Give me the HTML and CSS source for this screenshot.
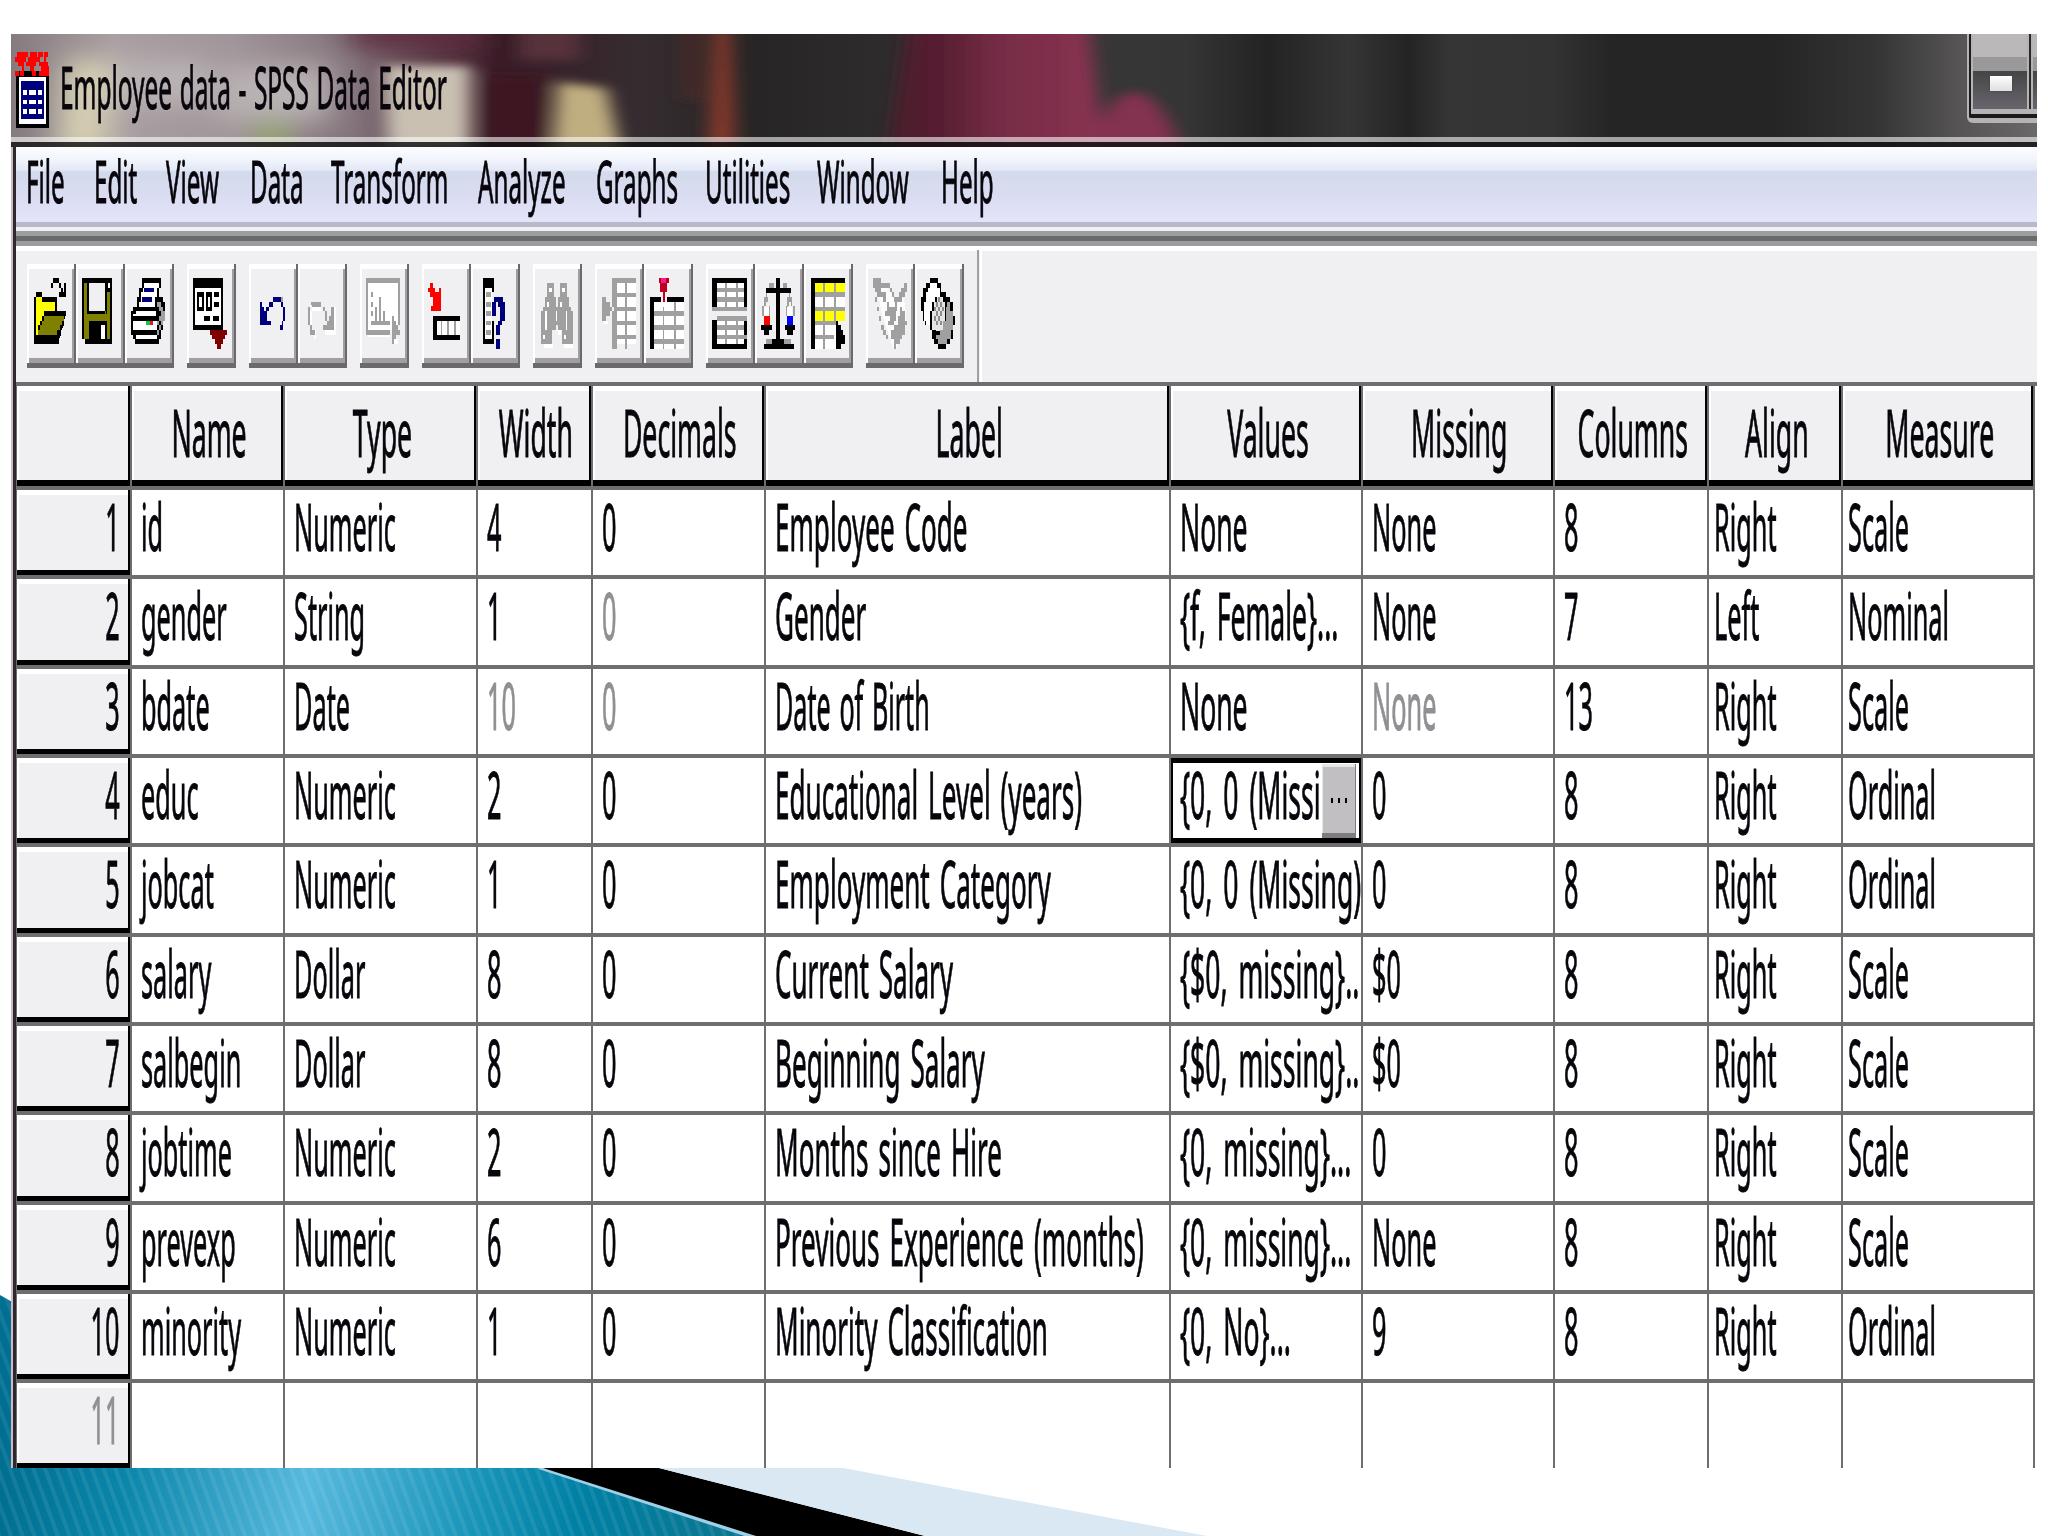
FILE: index.html
```html
<!DOCTYPE html>
<html lang="en">
<head>
    <meta charset="UTF-8">
    <meta name="viewport" content="width=device-width, initial-scale=1.0">
    <title>Employee data - SPSS Data Editor</title>
    <link rel="stylesheet" href="styles.css">
</head>
<body>
    <!-- Slide background -->
    <svg class="slide-bg" viewBox="0 0 2048 1536">
        <defs>
            <linearGradient id="teal" gradientUnits="userSpaceOnUse" x1="0" y1="1500" x2="720" y2="1560">
                <stop offset="0" stop-color="#006f91"/>
                <stop offset=".17" stop-color="#0a86aa"/>
                <stop offset=".42" stop-color="#58b9dd"/>
                <stop offset=".66" stop-color="#1894b8"/>
                <stop offset=".8" stop-color="#0080a5"/>
                <stop offset="1" stop-color="#0a7790"/>
            </linearGradient>
            <pattern id="stripes" width="11" height="11" patternUnits="userSpaceOnUse" patternTransform="rotate(-20)">
                <rect width="4" height="11" fill="#fff" opacity=".08"/>
            </pattern>
        </defs>
        <path d="M0 1295L14 1303V1468H543L754 1536H0z" fill="url(#teal)"/>
        <path d="M0 1295L14 1303V1468H543L754 1536H0z" fill="url(#stripes)"/>
        <path d="M539 1467L754 1537" stroke="#9fd0e6" stroke-width="4"/>
        <path d="M543 1468H659L925 1536H756z"/>
        <path d="M659 1468H843L1207 1536H925z" fill="#d9e8f2"/>
    </svg>

    <div class="window">
        <div class="titlebar">
            <svg class="glass" viewBox="11 34 2026 113" preserveAspectRatio="none">
                <defs>
                    <filter id="soft" x="-20%" y="-20%" width="140%" height="140%"><feGaussianBlur stdDeviation="9 5"/></filter>
                    <filter id="softer" x="-20%" y="-30%" width="140%" height="160%"><feGaussianBlur stdDeviation="16 12"/></filter>
                    <linearGradient id="base" gradientUnits="userSpaceOnUse" x1="11" y1="0" x2="2037" y2="0">
                        <stop offset="0" stop-color="#857b7f"/>
                        <stop offset=".05" stop-color="#a99fa2"/>
                        <stop offset=".11" stop-color="#a0959a"/>
                        <stop offset=".17" stop-color="#82727a"/>
                        <stop offset=".22" stop-color="#50303c"/>
                        <stop offset=".24" stop-color="#3a1c27"/>
                        <stop offset=".31" stop-color="#352c30"/>
                        <stop offset=".37" stop-color="#272525"/>
                        <stop offset=".53" stop-color="#383737"/>
                        <stop offset=".58" stop-color="#363535"/>
                        <stop offset=".62" stop-color="#242323"/>
                        <stop offset=".66" stop-color="#363535"/>
                        <stop offset=".69" stop-color="#252424"/>
                        <stop offset=".71" stop-color="#363535"/>
                        <stop offset=".76" stop-color="#343333"/>
                        <stop offset=".79" stop-color="#262525"/>
                        <stop offset=".87" stop-color="#262525"/>
                        <stop offset=".92" stop-color="#343434"/>
                        <stop offset=".96" stop-color="#555354"/>
                        <stop offset="1" stop-color="#6a6869"/>
                    </linearGradient>
                    <linearGradient id="pink" x1="0" x2="1" y1="0" y2="0">
                        <stop offset="0" stop-color="#4a1b2a"/>
                        <stop offset=".25" stop-color="#571f31"/>
                        <stop offset=".5" stop-color="#752c45"/>
                        <stop offset="1" stop-color="#8b3253"/>
                    </linearGradient>
                </defs>
                <rect x="11" y="34" width="2026" height="113" fill="url(#base)"/>
                <g filter="url(#softer)">
                    <path d="M350 20H480V48H350z" fill="#5d2c3c"/>
                    <path d="M65 60H110L108 155H58z" fill="#d8d1b4"/>
                    <path d="M110 60H210V105H110z" fill="#bab2b4"/>
                    <path d="M225 65H330V120H215z" fill="#b9b2b2"/>
                    <path d="M262 122H285V150H258z" fill="#8fb04c"/>
                </g>
                <g filter="url(#soft)">
                    <path d="M384 66H470V150H388z" fill="#c9c0b2"/>
                    <path d="M484 75H545V160H484z" fill="#3d1422"/>
                    <path d="M520 25H580V60H520z" fill="#56303a"/>
                    <path d="M558 82L606 88L622 155H552z" fill="#bfae80"/>
                    <path d="M684 25H698V100H684z" fill="#4c2a28"/>
                    <path d="M714 25H730L736 155H708z" fill="#84392a"/>
                </g>
                <g filter="url(#soft)">
                    <path d="M908 20H1088L1106 160H888z" fill="url(#pink)"/>
                    <path d="M1095 150Q1105 90 1140 92Q1168 105 1185 160H1090z" fill="#83304f"/>
                </g>
                <rect x="11" y="137" width="2026" height="5" fill="#fff" opacity=".58"/>
                <rect x="11" y="142" width="2026" height="5" fill="#111" opacity=".8"/>
            </svg>
            <svg class="app-icon" viewBox="22 25 102 226" preserveAspectRatio="none">
                <path d="M26 96h97v155H26zM34 82h80v14H34z"/>
                <path d="M33 98h83v141H33z" fill="#fff"/>
                <path d="M39 110h71v113H39z" fill="#00007c"/>
                <path d="M47 138h12v14H47zM65 138h20v14H65zM91 138h13v14H91zM47 167h12v14H47zM65 167h20v14H65zM91 167h13v14H91zM47 195h12v14H47zM65 195h20v14H65zM91 195h13v14H91z" fill="#fff"/>
                <path d="M28 26h34v14h-8v14h8v-14h6v-14h20v14h4v-14h14v14h-8v14h10v-28h14v14h-6v14h6v14h4v28H94v-14h6V68h-6V54H84v14h-4v14h6v14H72V82h-6V68H54V54h-4v28h-2v14H38V82h4V68H30V54h-8V40h6zM22 82h12v14H22z" fill="red"/>
            </svg>
            <span class="title">Employee data - SPSS Data Editor</span>
            <div class="minimize"><i></i></div>
        </div>

        <div class="client">
            <div class="menubar">
                <span>File</span>
                <span>Edit</span>
                <span>View</span>
                <span>Data</span>
                <span>Transform</span>
                <span>Analyze</span>
                <span>Graphs</span>
                <span>Utilities</span>
                <span>Window</span>
                <span>Help</span>
            </div>

            <div class="toolbar">
                <div class="group">
                    <!-- open -->
                    <svg class="btn" viewBox="52 72 147 312" preserveAspectRatio="none">
                        <path d="M129 115h19v14h-19zM123 129h6v14h-6zM148 129h6v14h6v14h2v-28h6v42h-20v-14h6v-14h-6z"/>
                        <path d="M78 157h19v14h45v43h26v14l-6 14v14l-7 14v14l-8 14v14H72V171h6z"/>
                        <path d="M78 171h19v15h39v28h-32v14h-7v14h-6v14h-6v28h-7z" fill="#ff0"/>
                        <path d="M104 228h58v14h-6v14h-6v14h-7v14H85v-14h6v-14h6v-14h7z" fill="#808000"/>
                    </svg>
                    <!-- save -->
                    <svg class="btn" viewBox="200 72 147 312" preserveAspectRatio="none">
                        <path d="M219 115h90v197h-83v-14h-7z"/>
                        <path d="M225 129h9v92h54v-64h15v141h-10v-56h-55v56h-13z" fill="#808000"/>
                        <path d="M234 129v84h57v-84h-3v84h-50v-84z"/>
                        <path d="M238 129h50v84h-50z" fill="#f0eff2"/>
                        <path d="M295 129h8v14h-8zM276 256h12v42h-12z" fill="#fff"/>
                        <path d="M291 129h3v92h-3z"/>
                    </svg>
                    <!-- print -->
                    <svg class="btn" viewBox="348 72 147 312" preserveAspectRatio="none">
                        <path d="M398 115h58v28h-6v28h12v14h5v57h-5v28h-6v28h-6v14h-71v-14h-6v-14h-7v-70h6v-14h13v-29h6v-28h7z"/>
                        <path d="M405 129h44v14h-6v28h-6v29h-46v-14h6v-29h6v-14h2z" fill="#fff"/>
                        <path d="M380 214h62v14h-70v-7h8zM372 242h71v28h-71zM380 284h63v14h-63z" fill="#fff"/>
                        <path d="M404 143h32v14h-32zM398 171h32v14h-32z" fill="#00007c"/>
                        <path d="M410 242h12v14h-12z" fill="#1c3"/><path d="M423 242h8v14h-8z" fill="#e13"/>
                        <path d="M449 185h6v15h6v14h6v28h-6v14h-6v-14h-6v-14h6v-14h-6v-14h-6v-14h6zM443 242h6v14h-6zM449 256h6v14h-6zM443 270h6v14h-6z" fill="#a0a0a0"/>
                    </svg>
                </div>
                <div class="group">
                    <!-- dialog recall -->
                    <svg class="btn" viewBox="534 72 147 312" preserveAspectRatio="none">
                        <path d="M552 115h90v155h-90z"/>
                        <path d="M558 143h78v113h-78z" fill="#fff"/>
                        <path d="M565 157h19v57h-19zM590 157h19v57h-19zM615 157h15v14h-15zM615 186h15v14h-15zM585 228h18v14h-18zM611 228h19v14h-19z"/>
                        <path d="M571 171h7v29h-7zM596 171h7v29h-7z" fill="#fff"/>
                        <path d="M603 270h51v14h-6v14h-6v14h-7v14h-12v-14h-6v-14h-7v-14h-7z" fill="#800000"/>
                    </svg>
                </div>
                <div class="group">
                    <!-- undo -->
                    <svg class="btn" viewBox="718 72 147 312" preserveAspectRatio="none">
                        <path d="M750 186h7v14h6v14h7v-14h7v-14h12v-15h25v15h-25v14h-12v14h-6v28h12v14h-33zM814 186h7v14h6v42h-6v28h-11v-14h6v-14h5v-42h-7z" fill="#00007c"/>
                        <path d="M814 171h7v15h-7z" fill="#a0a0a0"/>
                    </svg>
                    <!-- redo -->
                    <svg class="btn" viewBox="867 72 147 312" preserveAspectRatio="none">
                        <path d="M910 200h26v14h-26zM904 214h6v56h-6zM910 270h12v14h-12zM916 284h6v14h-6zM949 270h31v14h-31zM974 200h6v70h-6z" fill="#fff"/>
                        <path d="M904 186h32v14h12v14h7v28h6v-14h6v-28h7v70h-31v-14h12v-14h-6v-28h-7v-14h-32zM897 200h7v14h-7zM897 214h6v42h-6zM903 256h7v14h7v14h-13v-14h-1z" fill="#a0a0a0"/>
                    </svg>
                </div>
                <div class="group">
                    <!-- goto chart -->
                    <svg class="btn" viewBox="32 72 147 312" preserveAspectRatio="none">
                        <path d="M57 129h90v141H57zM57 284h64v6H57zM135 298h10v14h-10z" fill="#fff"/>
                        <path d="M51 115h102v141h-6V129H57v141h64v14H51zM64 157h6v14h-6zM64 186h6v14h-6zM64 214h6v14h-6zM64 242h12v-42h6v42h7v-70h6v70h7v-28h6v28h13v14H64zM127 228h7v14h6v14h6v14h7v14h-13v14h-6v14h-7z" fill="#a0a0a0"/>
                    </svg>
                </div>
                <div class="group">
                    <!-- goto case -->
                    <svg class="btn" viewBox="217 72 147 312" preserveAspectRatio="none">
                        <path d="M242 129h7v14h6v14h14v-14h6v70h-32v-14h6v-28h-7v-14h-7v-14h7z" fill="red"/>
                        <path d="M249 228h83v71h-83z"/>
                        <path d="M261 242h71v42h-71z" fill="#fff"/>
                        <path d="M274 242h4v42h-4zM293 242h4v42h-4zM312 242h6v42h-6z" fill="#a0a0a0"/>
                    </svg>
                    <!-- variables -->
                    <svg class="btn" viewBox="366 72 147 312" preserveAspectRatio="none">
                        <path d="M402 115h33v197h-33z"/>
                        <path d="M409 143h19v155h-19z" fill="#fff"/>
                        <path d="M411 157h16v14h-16zM411 186h16v14h-16zM411 214h16v14h-16zM411 242h16v14h-16zM411 270h16v14h-16z" fill="#a0a0a0"/>
                        <path d="M428 157h8v85h-8z" fill="#f0eff2"/>
                        <path d="M434 171h27v15h6v56h-7v14h-6v28h-13v-28h6v-14h7v-42h-6v-14h-6v42h-14v-42h6zM441 298h12v28h-12z" fill="#00007c"/>
                    </svg>
                </div>
                <div class="group">
                    <!-- find -->
                    <svg class="btn" viewBox="551 72 147 312" preserveAspectRatio="none">
                        <path d="M584 312h26v12h-26zM645 312h26v12h-26zM610 284h10v-14h14v14h-8v-12h-6v14h-10z" fill="#fff"/>
                        <path d="M594 129h19v42h7v29h6v-29h7v-42h19v42h6v29h7v14h6v98h-32v-42h-12v-14h-7v14h-12v42h-32v-98h6v-14h6v-29h6z" fill="#a0a0a0"/>
                        <path d="M600 143h7v14h-7zM639 143h7v14h-7zM594 186h6v14h-6zM633 186h6v14h-6zM588 214h6v56h-6zM650 214h4v56h-4zM582 284h6v14h-6zM645 284h6v14h-6zM620 214h4v28h-4z" fill="#fff"/>
                    </svg>
                </div>
                <div class="group">
                    <!-- insert case -->
                    <svg class="btn" viewBox="735 72 147 312" preserveAspectRatio="none">
                        <path d="M797 129h62v183h-62zM762 242h12v10h-12z" fill="#fff"/>
                        <path d="M787 115h71v14h-58v29h24v-29h6v29h28v13h-28v29h28v14h-28v28h28v14h-28v28h28v14h-28v28h-6v-28h-24v28h-13zM800 171v29h24v-29zM800 214v28h24v-28zM800 256v28h24v-28zM755 171h12v15h13v14h13v14h-13v14h-12v14h-13z" fill="#a0a0a0" fill-rule="evenodd"/>
                    </svg>
                    <!-- insert variable -->
                    <svg class="btn" viewBox="884 72 147 312" preserveAspectRatio="none">
                        <path d="M914 186h91v140h-91z" fill="#fff"/>
                        <path d="M901 171h33v15h-19v141h-14zM953 171h52v15h-52z"/>
                        <path d="M915 214h90v14h-90zM915 256h90v14h-90zM915 298h90v14h-90zM941 200h4v127h-4zM973 186h6v141h-6z" fill="#a0a0a0"/>
                        <path d="M928 115h32v14h-6v28h-8v28h-6v-28h-7v-28h-5z" fill="#c00020"/>
                        <path d="M936 115h14v14h-14z" fill="#f0208a"/>
                    </svg>
                </div>
                <div class="group">
                    <!-- split file -->
                    <svg class="btn" viewBox="48 72 147 312" preserveAspectRatio="none">
                        <path d="M66 115h105v86H66zM66 240h105v87H66z"/>
                        <path d="M80 129h82v71H80zM80 242h82v70H80z" fill="#fff"/>
                        <path d="M80 143h82v14H80zM80 171h82v15H80zM66 200h105v14H66zM80 228h91v14H80zM80 256h82v14H80zM80 284h91v14H80zM106 129h4v71h-4zM138 129h6v71h-6zM106 242h4v70h-4zM138 242h6v70h-6z" fill="#a0a0a0"/>
                    </svg>
                    <!-- weight cases -->
                    <svg class="btn" viewBox="196 72 147 312" preserveAspectRatio="none">
                        <path d="M239 129h13v14h-13zM279 129h12v14h-12zM228 298h76v14h-76zM228 157h4v14h4v28h6v29h-5v-29h-3v-14h-5v14h-6v29h-6v-29h5v-28h6zM298 157h4v14h6v28h8v29h-5v-29h-6v-14h-6v14h-5v29h-6v-29h5v-28h5z" fill="#a0a0a0"/>
                        <path d="M222 200h15v28h-15zM293 200h15v28h-15z" fill="#fff"/>
                        <path d="M258 115h14v28h32v15h-32v140h12v14h28v15h-90v-15h26v-14h10v-140h-30v-15h30zM215 256h31v14h-7v14h-17v-14h-7zM285 256h32v14h-7v14h-17v-14h-8z"/>
                        <path d="M222 228h18v28h-18z" fill="red"/><path d="M291 228h20v28h-20z" fill="#00f"/>
                    </svg>
                    <!-- select cases -->
                    <svg class="btn" viewBox="343 72 147 312" preserveAspectRatio="none">
                        <path d="M375 129h90v113h-26v85h-64z" fill="#fff"/>
                        <path d="M375 129h90v28h-90zM375 214h90v28h-90z" fill="#ff0"/>
                        <path d="M375 157h90v14h-90zM375 200h90v14h-90zM375 242h63v14h-63zM375 284h57v14h-57zM401 129h5v198h-5zM434 129h4v113h-4z" fill="#a0a0a0"/>
                        <path d="M363 115h102v14h-90v198h-12zM439 242h7v14h7v14h6v14h6v28h-12v15h-14z"/>
                    </svg>
                </div>
                <div class="group">
                    <!-- value labels -->
                    <svg class="btn" viewBox="528 72 147 312" preserveAspectRatio="none">
                        <path d="M562 143h30l20 30h30l6 50v30l-30 74h-8l-36-110z" fill="#fff" opacity=".8"/>
                        <path d="M554 115h20v14h25v14h-25v14h13v28h-7v-14h-19v-14h-7v-14h-6v-28h6zM642 129h8v28h-6v15h-7v14h-24v-14h-7v-15h-7v-14h8v14h6v14h13v-14h7v-14h9zM555 171h6v29h7v28h6v28h7v14h7v14h6v14h-7v-14h-7v-14h-6v-28h-7v-28h-6v-28h-6zM590 186h6v14h20v-14h6v28h-32zM585 214h32v28h-6v14h-18v-14h8v-14h-16zM630 200h7v14h7v28h6v14h-6v28h-7v14h-8v14h-12v15h-6v-29h-7v-28h7v-14h13v-28h6z" fill="#a0a0a0"/>
                    </svg>
                    <!-- use sets -->
                    <svg class="btn" viewBox="676 72 147 312" preserveAspectRatio="none">
                        <path d="M720 115h26v14h8v28h14v14h14v15h8v42h6v28h-6v42h-8v14h-12v15h-24v-15h-12v-14h-8v-28h-6v-14h-14v-14h-6v-28h-6v-42h6v-28h8v-15h12z"/>
                        <path d="M720 129h22v14h8v28h-14v15h-8v28h-6v42h-12v-14h-8v-56h6v-29h6v-14h6z" fill="#fff"/>
                        <path d="M772 186h10v28h8v56h-6v28h-12v14h-26v-14h-8v-14h14v-14h8v-28h8v-42h4z" fill="#a0a0a0"/>
                        <path d="M742 171h18v15h6v56h-6v28h-8v4h-14v-4h-10v-56h6v-28h8z" fill="#e4e4e4"/>
                        <path d="M744 171h6v15h-6zM752 186h6v14h-6zM738 186h6v14h-6zM745 200h6v14h-6zM758 200h5v14h-5zM732 200h6v14h-6zM738 214h6v14h-6zM752 214h6v14h-6zM745 228h6v14h-6zM732 228h6v14h-6zM738 242h6v14h-6zM752 242h6v14h-6z" fill="#8c8c8c"/>
                    </svg>
                </div>
                <div class="dock-end"></div>
            </div>

            <!-- Variable view -->
            <div class="sheet">
                <div class="row head">
                    <div></div><div><span>Name</span></div><div><span>Type</span></div><div><span>Width</span></div><div><span>Decimals</span></div><div><span>Label</span></div><div><span>Values</span></div><div><span>Missing</span></div><div><span>Columns</span></div><div><span>Align</span></div><div><span>Measure</span></div>
                </div>
                <div class="row">
                    <div class="num"><span>1</span></div><div><span>id</span></div><div><span>Numeric</span></div><div><span>4</span></div><div><span>0</span></div><div><span>Employee Code</span></div><div><span>None</span></div><div><span>None</span></div><div><span>8</span></div><div><span>Right</span></div><div><span>Scale</span></div>
                </div>
                <div class="row">
                    <div class="num"><span>2</span></div><div><span>gender</span></div><div><span>String</span></div><div><span>1</span></div><div class="off"><span>0</span></div><div><span>Gender</span></div><div><span>{f, Female}...</span></div><div><span>None</span></div><div><span>7</span></div><div><span>Left</span></div><div><span>Nominal</span></div>
                </div>
                <div class="row">
                    <div class="num"><span>3</span></div><div><span>bdate</span></div><div><span>Date</span></div><div class="off"><span>10</span></div><div class="off"><span>0</span></div><div class="tight"><span>Date of Birth</span></div><div><span>None</span></div><div class="off"><span>None</span></div><div><span>13</span></div><div><span>Right</span></div><div><span>Scale</span></div>
                </div>
                <div class="row">
                    <div class="num"><span>4</span></div><div><span>educ</span></div><div><span>Numeric</span></div><div><span>2</span></div><div><span>0</span></div><div><span>Educational Level (years)</span></div><div class="active"><span>{0, 0 (Missi</span><button class="more"><i></i><i></i><i></i></button></div><div><span>0</span></div><div><span>8</span></div><div><span>Right</span></div><div><span>Ordinal</span></div>
                </div>
                <div class="row">
                    <div class="num"><span>5</span></div><div><span>jobcat</span></div><div><span>Numeric</span></div><div><span>1</span></div><div><span>0</span></div><div><span>Employment Category</span></div><div><span>{0, 0 (Missing)</span></div><div><span>0</span></div><div><span>8</span></div><div><span>Right</span></div><div><span>Ordinal</span></div>
                </div>
                <div class="row">
                    <div class="num"><span>6</span></div><div><span>salary</span></div><div><span>Dollar</span></div><div><span>8</span></div><div><span>0</span></div><div><span>Current Salary</span></div><div><span>{$0, missing}..</span></div><div><span>$0</span></div><div><span>8</span></div><div><span>Right</span></div><div><span>Scale</span></div>
                </div>
                <div class="row">
                    <div class="num"><span>7</span></div><div><span>salbegin</span></div><div><span>Dollar</span></div><div><span>8</span></div><div><span>0</span></div><div><span>Beginning Salary</span></div><div><span>{$0, missing}..</span></div><div><span>$0</span></div><div><span>8</span></div><div><span>Right</span></div><div><span>Scale</span></div>
                </div>
                <div class="row">
                    <div class="num"><span>8</span></div><div><span>jobtime</span></div><div><span>Numeric</span></div><div><span>2</span></div><div><span>0</span></div><div><span>Months since Hire</span></div><div><span>{0, missing}...</span></div><div><span>0</span></div><div><span>8</span></div><div><span>Right</span></div><div><span>Scale</span></div>
                </div>
                <div class="row">
                    <div class="num"><span>9</span></div><div><span>prevexp</span></div><div><span>Numeric</span></div><div><span>6</span></div><div><span>0</span></div><div><span>Previous Experience (months)</span></div><div><span>{0, missing}...</span></div><div><span>None</span></div><div><span>8</span></div><div><span>Right</span></div><div><span>Scale</span></div>
                </div>
                <div class="row">
                    <div class="num"><span>10</span></div><div><span>minority</span></div><div><span>Numeric</span></div><div><span>1</span></div><div><span>0</span></div><div><span>Minority Classification</span></div><div><span>{0, No}...</span></div><div><span>9</span></div><div><span>8</span></div><div><span>Right</span></div><div><span>Ordinal</span></div>
                </div>
                <div class="row last">
                    <div class="num off"><span>11</span></div><div></div><div></div><div></div><div></div><div></div><div></div><div></div><div></div><div></div><div></div>
                </div>
            </div>
        </div>
    </div>
</body>
</html>
```
FILE: styles.css
```css
body, html {
    margin: 0;
    padding: 0;
    width: 2048px;
    height: 1536px;
    overflow: hidden;
    background: #fff;
    color: #08060c;
    font-family: "Noto Sans", "Open Sans", sans-serif;
}

body {
    position: relative;
}

.slide-bg {
    position: absolute;
    left: 0;
    top: 0;
    width: 2048px;
    height: 1536px;
}

/* Window */
.window {
    position: relative;
    width: 2026px;
    height: 1434px;
    margin: 34px 0 0 11px;
}

.titlebar {
    position: relative;
    display: flex;
    height: 113px;
}

.glass {
    position: absolute;
    left: 0;
    top: 0;
    width: 100%;
    height: 100%;
}

.app-icon {
    position: relative;
    width: 34px;
    height: 76px;
    margin: 18px 0 0 4px;
    shape-rendering: crispEdges;
}

.title {
    position: relative;
    width: 0;
    margin-left: 11px;
    font-size: 59px;
    line-height: 105px;
    word-spacing: 3px;
    transform: scaleX(.414);
    transform-origin: left;
}

/* Tall narrow lettering */
.title, .menubar span, .row span {
    white-space: nowrap;
    -webkit-text-stroke: 1px;
}

.minimize {
    position: relative;
    box-sizing: border-box;
    width: 70px;
    height: 89px;
    margin-left: auto;
    border-left: 2px solid #b5b3b4;
    border-bottom: 5px solid #b5b3b4;
    border-bottom-left-radius: 6px;
    background:
        linear-gradient(#b5b3b4, #b5b3b4) 2px 75px / 68px 5px no-repeat,
        linear-gradient(#b5b3b4, #b5b3b4) 2px 0 / 2px 80px no-repeat,
        linear-gradient(90deg, #b5b3b4 2px, #2a292a 2px 4px, #b5b3b4 4px) 58px 0 / 6px 80px no-repeat,
        linear-gradient(#bab8b9 23px, #9a9898 23px 37px, #454446 37px, #68666d 75px) 4px 0 / 66px 75px no-repeat,
        #1b1a1c;
}

.minimize i {
    display: block;
    width: 22px;
    height: 15px;
    margin: 42px 0 0 21px;
    background: linear-gradient(#fff, #dedede);
    box-shadow: 0 0 2px #3c4260;
}

.client {
    height: 1321px;
    box-sizing: border-box;
    border-left: 2px solid #cbbcc4;
    background: #fff;
    box-shadow: inset 3px 0 #30262d;
    padding-left: 3px;
}

/* Menu */
.menubar {
    display: grid;
    grid-template-columns: 68px 72px 84px 81px 147px 118px 109px 112px 124px 80px;
    height: 75px;
    padding-left: 10px;
    background: linear-gradient(#fcfdfe, #f0f3fb 14px, #e3e8f6 23px, #d3daec 25px, #d9dcf0 45px, #e2e5f9 73px);
    border-bottom: 5px solid #b9b9cb;
    font-size: 59px;
    line-height: 66px;
}

.menubar span {
    width: 0;
    transform: scaleX(.41);
    transform-origin: left;
}

/* Toolbar */
.toolbar {
    display: flex;
    align-items: flex-start;
    gap: 13px;
    height: 155px;
    box-sizing: border-box;
    padding: 37px 0 0 11px;
    background: linear-gradient(#f1f1f4 4px, #9b9e9c 4px 9px, #696b6b 9px 14px, #9d9ba0 14px 19px, #fff 19px 24px, #f0eff2 24px);
}

.group {
    display: flex;
}

.btn {
    width: 49px;
    height: 104px;
    shape-rendering: crispEdges;
    background: linear-gradient(#6b696c, #6b696c) right / 2px 100% no-repeat,
        linear-gradient(#6b696c, #6b696c) bottom / 100% 5px no-repeat,
        linear-gradient(#fff, #fff) top / 100% 5px no-repeat,
        linear-gradient(#fff, #fff) left / 2px 100% no-repeat,
        linear-gradient(#a09ea1, #a09ea1) 45px 5px / 2px 94px no-repeat,
        linear-gradient(#a09ea1, #a09ea1) 1px 94px / 46px 5px no-repeat,
        #f0eff2;
}

.dock-end {
    width: 2px;
    height: 132px;
    margin-top: -14px;
    background: #a09ea1;
    box-shadow: 3px 0 #fff;
}

/* Grid */
.sheet {
    width: 2020px;
    border-top: 4px solid #6f6d70;
    border-left: 1px solid #6f6d70;
    font-size: 66px;
    line-height: 71px;
}

.row {
    display: grid;
    grid-template-columns: 115px 153px 193px 115px 173px 405px 192px 192px 154px 134px 192px;
    height: 89.33px;
}

.row > div {
    display: flex;
    align-items: flex-start;
    box-sizing: border-box;
    min-width: 0;
    padding-left: 9px;
    background: #fff;
    border-right: 2px solid #6f6d70;
    border-bottom: 4px solid #6f6d70;
}

.row > div:nth-child(n+10) {
    padding-left: 5px;
}

.row span {
    flex: none;
    transform: scaleX(.383);
    transform-origin: left;
}

.row > div:nth-child(6) span {
    word-spacing: 8px;
    transform: scaleX(.395);
}

.row > .tight:nth-child(6) span {
    word-spacing: 6px;
    transform: scaleX(.38);
}

.row > div:nth-child(7) span {
    word-spacing: 10px;
    transform: scaleX(.402);
}

.row.head {
    height: 104px;
    line-height: 91px;
}

.row.head > div {
    justify-content: center;
    padding-left: 3px;
    background: #f0eff2;
    box-shadow: inset -2px 0 #000, inset 0 -6px #000, inset 2px 5px #fff;
}

.row.head > div:nth-child(n) span {
    transform: scaleX(.404);
    transform-origin: center;
}

.row > .num {
    justify-content: flex-end;
    padding: 0 10px 0 0;
    background: #f0eff2;
    box-shadow: inset -2px 0 #000, inset 0 -5px #000, inset 2px 5px #fff;
}

.num span {
    transform-origin: right;
}

.off {
    color: #918f94;
}

.row.last {
    height: 85px;
}

.row.last > div {
    border-bottom: 0;
}

/* Selected cell */
.row > .active {
    position: relative;
    box-shadow: inset 2px 5px #000, inset -2px -5px #000;
}

.more {
    position: absolute;
    right: 5px;
    top: 6px;
    display: flex;
    align-items: center;
    justify-content: center;
    gap: 5px;
    width: 34px;
    height: 74px;
    padding: 0;
    border: 0;
    background: #c1bfc2;
    box-shadow: inset -1px -5px #7e7c80, inset 1px 3px #e8e6e9;
}

.more i {
    width: 2px;
    height: 5px;
    background: #000;
}
```
